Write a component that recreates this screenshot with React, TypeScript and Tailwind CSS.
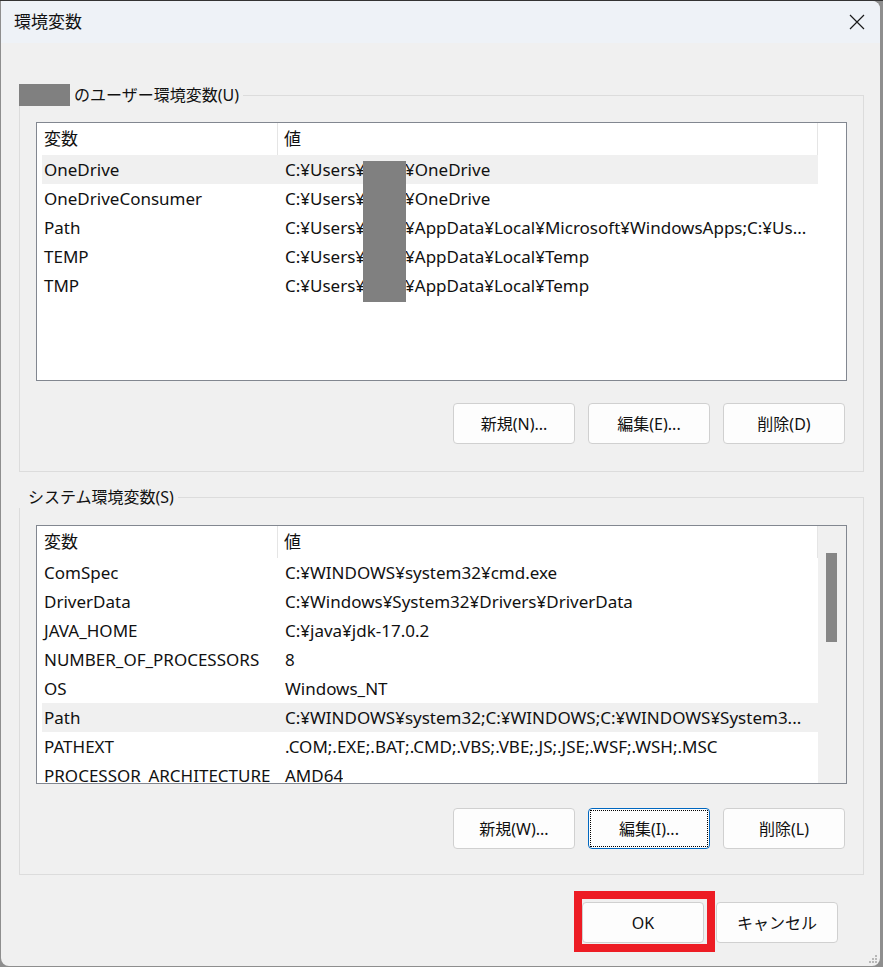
import React from 'react';

type Row = { name: string; value: React.ReactNode; hi?: boolean };

const Masked = ({ pre, post }: { pre: string; post: string }) => (
  <>
    {pre}
    <span className="inline-block w-[40px]" />
    {post}
  </>
);

const userRows: Row[] = [
  { name: 'OneDrive', value: <Masked pre="C:¥Users¥" post="¥OneDrive" />, hi: true },
  { name: 'OneDriveConsumer', value: <Masked pre="C:¥Users¥" post="¥OneDrive" /> },
  {
    name: 'Path',
    value: <Masked pre="C:¥Users¥" post="¥AppData¥Local¥Microsoft¥WindowsApps;C:¥Us..." />,
  },
  { name: 'TEMP', value: <Masked pre="C:¥Users¥" post="¥AppData¥Local¥Temp" /> },
  { name: 'TMP', value: <Masked pre="C:¥Users¥" post="¥AppData¥Local¥Temp" /> },
];

const systemRows: Row[] = [
  { name: 'ComSpec', value: 'C:¥WINDOWS¥system32¥cmd.exe' },
  { name: 'DriverData', value: 'C:¥Windows¥System32¥Drivers¥DriverData' },
  { name: 'JAVA_HOME', value: 'C:¥java¥jdk-17.0.2' },
  { name: 'NUMBER_OF_PROCESSORS', value: '8' },
  { name: 'OS', value: 'Windows_NT' },
  { name: 'Path', value: 'C:¥WINDOWS¥system32;C:¥WINDOWS;C:¥WINDOWS¥System3...', hi: true },
  { name: 'PATHEXT', value: '.COM;.EXE;.BAT;.CMD;.VBS;.VBE;.JS;.JSE;.WSF;.WSH;.MSC' },
  { name: 'PROCESSOR_ARCHITECTURE', value: 'AMD64' },
];

const ListView = ({
  rows,
  scroll = false,
  children,
}: {
  rows: Row[];
  scroll?: boolean;
  children?: React.ReactNode;
}) => (
  <div className="relative flex h-[259px] w-[811px] overflow-hidden border border-[#828790] bg-white">
    <div className="w-[781px] shrink-0">
      {/* Header */}
      <div className="flex h-[32px] items-center border-r border-[#e5e5e5] text-[17px]">
        <div className="flex h-full w-[241px] items-center border-r border-[#e5e5e5] pl-[7px]">
          変数
        </div>
        <div className="pl-[6px]">値</div>
      </div>
      {rows.map((r) => (
        <div
          key={r.name}
          className={`ml-[5px] flex h-[29px] items-center whitespace-nowrap text-[17px] ${r.hi ? 'bg-[#f0f0f0]' : ''}`}
        >
          <div className="w-[236px] shrink-0 overflow-hidden pl-[2px]">{r.name}</div>
          <div className="overflow-hidden pl-[7px]">{r.value}</div>
        </div>
      ))}
    </div>
    {scroll && (
      <div className="flex-1 bg-[#f0f0f0] pl-[8px] pt-[27px]">
        <div className="h-[89px] w-[11px] bg-[#868686]" />
      </div>
    )}
    {children}
  </div>
);

const Btn = ({ label, focused = false }: { label: string; focused?: boolean }) => (
  <button
    className={`flex h-[41px] w-[122px] items-center justify-center rounded-[4px] border bg-[#fdfdfd] ${
      focused ? 'border-[#0067c0]' : 'border-[#d0d0d0]'
    }`}
  >
    {focused ? (
      <span className="flex h-[35px] w-[116px] items-center justify-center outline-1 outline-dotted outline-black">
        {label}
      </span>
    ) : (
      label
    )}
  </button>
);

const GroupBox = ({
  label,
  children,
  className = '',
}: {
  label: React.ReactNode;
  children: React.ReactNode;
  className?: string;
}) => (
  <div className={`relative w-[845px] border border-[#dcdcdc] ${className}`}>
    <div className="absolute -top-[12px] left-[-1px] flex h-[22px] items-center bg-[#f0f0f0] pr-[4px]">
      {label}
    </div>
    {children}
  </div>
);

export default function App() {
  return (
    <div className="h-[967px] w-[883px] overflow-hidden border-t border-[#333] bg-[#8e8e8e] font-['Noto_Sans','Noto_Sans_CJK_JP',sans-serif] text-[16px] text-[#111]">
      <div className="relative ml-[1px] flex h-[965px] w-[879px] flex-col overflow-hidden rounded-tr-[8px] rounded-b-[8px] bg-[#f0f0f0]">
        {/* Title bar */}
        <div className="flex h-[42px] shrink-0 items-center justify-between bg-[#eef2f7] pl-[13px] pr-[15px]">
          <span className="text-[17px]">環境変数</span>
          <svg width="16" height="16" viewBox="0 0 16 16" className="text-[#1a1a1a]">
            <path d="M1 1L15 15M15 1L1 15" stroke="currentColor" strokeWidth="1.2" />
          </svg>
        </div>

        {/* User variables */}
        <GroupBox
          className="ml-[18px] mt-[52px] h-[377px] pl-[16px] pt-[26px]"
          label={
            <>
              <span className="mr-[4px] inline-block h-[22px] w-[51px] bg-[#808080]" />
              <span>のユーザー環境変数(U)</span>
            </>
          }
        >
          <ListView rows={userRows}>
            <div className="absolute left-[326px] top-[38px] h-[141px] w-[43px] bg-[#808080]" />
          </ListView>
          <div className="mr-[18px] mt-[22px] flex justify-end gap-[13px]">
            <Btn label="新規(N)..." />
            <Btn label="編集(E)..." />
            <Btn label="削除(D)" />
          </div>
        </GroupBox>

        {/* System variables */}
        <GroupBox
          className="ml-[18px] mt-[25px] h-[378px] pl-[16px] pt-[27px]"
          label={<span className="pl-[9px]">システム環境変数(S)</span>}
        >
          <ListView rows={systemRows} scroll />
          <div className="mr-[18px] mt-[24px] flex justify-end gap-[13px]">
            <Btn label="新規(W)..." />
            <Btn label="編集(I)..." focused />
            <Btn label="削除(L)" />
          </div>
        </GroupBox>

        {/* Dialog buttons */}
        <div className="mr-[42px] mt-[16px] flex items-start justify-end">
          <div className="border-[8px] border-[#ed1c24] pb-[1px] pr-[3px] pt-[3px]">
            <Btn label="OK" />
          </div>
          <div className="ml-[1px] pt-[11px]">
            <Btn label="キャンセル" />
          </div>
        </div>

        {/* Resize grip */}
        <svg
          width="10"
          height="10"
          viewBox="0 0 10 10"
          className="absolute bottom-[2px] right-[2px] fill-[#b8b8b8]"
        >
          <rect x="7" y="1" width="2" height="2" />
          <rect x="4" y="4" width="2" height="2" />
          <rect x="7" y="4" width="2" height="2" />
          <rect x="1" y="7" width="2" height="2" />
          <rect x="4" y="7" width="2" height="2" />
          <rect x="7" y="7" width="2" height="2" />
        </svg>
      </div>
    </div>
  );
}
